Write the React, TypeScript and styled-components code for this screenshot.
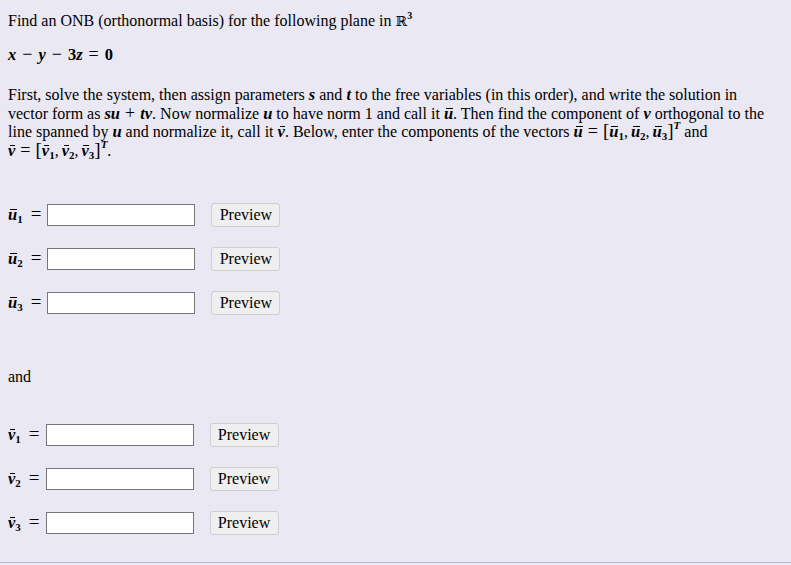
import styled, { createGlobalStyle } from "styled-components";

const GlobalStyle = createGlobalStyle`
  html, body {
    margin: 0;
    padding: 0;
    background: #eae8f3;
  }
  body {
    font-family: "Liberation Serif", "Times New Roman", serif;
    font-size: 16px;
    color: #000;
  }
`;

const Page = styled.div`
  min-height: 563px;
  box-sizing: border-box;
  padding: 8px 8px 0 8px;
  border-bottom: 1px solid #b9b1e2;
`;

const Title = styled.p`
  margin: 4px 0 0 0;
  line-height: 18px;
`;

const Equation = styled.p`
  margin: 16px 0 0 0;
  line-height: 18px;
`;

const Text = styled.p`
  margin: 22px 0 0 0;
  line-height: 18.5px;
  white-space: nowrap;
`;

const Var = styled.i`
  font-style: italic;
  font-weight: 700;
  font-size: 16.5px;
  line-height: 0;
`;

const Num = styled.b`
  font-size: 16.5px;
  line-height: 0;
`;

const Op = styled.span<{ $gap?: number }>`
  font-size: 18px;
  line-height: 0;
  margin: 0 ${({ $gap }) => $gap ?? 5}px;
`;

const LabelEq = styled.span`
  font-size: 19px;
  line-height: 0;
  margin-left: 8px;
`;

const Sub = styled.sub`
  font-size: 11px;
  font-style: normal;
  font-weight: 700;
  vertical-align: -3px;
  line-height: 0;
`;

const Sup = styled.sup`
  font-size: 11px;
  font-style: italic;
  font-weight: 700;
  vertical-align: 8px;
  line-height: 0;
`;

const BarVar = styled.span`
  position: relative;
  display: inline-block;
  font-style: italic;
  font-weight: 700;
  font-size: 16.5px;
  line-height: 16px;
  &::before {
    content: "";
    position: absolute;
    left: 2px;
    right: 0;
    top: 2px;
    height: 1px;
    background: #000;
  }
`;

const Bracket = styled.span`
  font-size: 19px;
  line-height: 0;
`;

const Comma = styled.span`
  margin-right: 3px;
`;

const Real = styled.span`
  font-family: "DejaVu Serif", serif;
  font-size: 14px;
`;

const RealSup = styled.sup`
  font-size: 10px;
  font-weight: 700;
  vertical-align: 7px;
  line-height: 0;
`;

const Fields = styled.div<{ $top: number }>`
  display: flex;
  flex-direction: column;
  gap: 21px;
  margin-top: ${({ $top }) => $top}px;
`;

const Row = styled.div`
  display: flex;
  align-items: center;
  height: 23px;
`;

const Label = styled.span`
  display: inline-flex;
  align-items: baseline;
  white-space: nowrap;
`;

const Input = styled.input`
  box-sizing: border-box;
  width: 148px;
  height: 22px;
  margin-left: 6px;
  border: 1px solid #767676;
  background: #fff;
  padding: 1px 2px;
  font: inherit;
`;

const Button = styled.button`
  box-sizing: border-box;
  height: 24px;
  width: 69px;
  margin-left: 16px;
  border: 1px solid #d0d0d0;
  border-radius: 3px;
  background: #efefef;
  font-family: "Liberation Serif", "Times New Roman", serif;
  font-size: 16px;
  color: #000;
  padding: 0;
`;

const And = styled.p`
  margin: 54px 0 0 0;
  line-height: 18px;
`;

const Bar = ({ v, n }: { v: string; n?: number }) => (
  <span>
    <BarVar>{v}</BarVar>
    {n !== undefined && <Sub>{n}</Sub>}
  </span>
);

const BarList = ({ v }: { v: string }) => (
  <>
    <Bracket>[</Bracket>
    <Bar v={v} n={1} />
    <Comma>,</Comma>
    <Bar v={v} n={2} />
    <Comma>,</Comma>
    <Bar v={v} n={3} />
    <Bracket>]</Bracket>
    <Sup>T</Sup>
  </>
);

const FieldRow = ({ v, n }: { v: string; n: number }) => (
  <Row>
    <Label>
      <Bar v={v} n={n} />
      <LabelEq>=</LabelEq>
    </Label>
    <Input type="text" />
    <Button>Preview</Button>
  </Row>
);

const App = () => {
  return (
    <Page>
      <GlobalStyle />
      <Title>
        Find an ONB (orthonormal basis) for the following plane in <Real>ℝ</Real>
        <RealSup>3</RealSup>
      </Title>
      <Equation>
        <Var>x</Var>
        <Op $gap={6}>−</Op>
        <Var>y</Var>
        <Op $gap={6}>−</Op>
        <Num>3</Num>
        <Var>z</Var>
        <Op $gap={6}>=</Op>
        <Num>0</Num>
      </Equation>
      <Text>
        First, solve the system, then assign parameters <Var>s</Var> and <Var>t</Var> to the free variables (in
        this order), and write the solution in
        <br />
        vector form as <Var>su</Var>
        <Op>+</Op>
        <Var>tv</Var>. Now normalize <Var>u</Var> to have norm 1 and call it <Bar v="u" />. Then find the
        component of <Var>v</Var> orthogonal to the
        <br />
        line spanned by <Var>u</Var> and normalize it, call it <Bar v="v" />. Below, enter the components of the
        vectors <Bar v="u" />
        <Op>=</Op>
        <BarList v="u" /> and
        <br />
        <Bar v="v" />
        <Op>=</Op>
        <BarList v="v" />.
      </Text>
      <Fields $top={43}>
        <FieldRow v="u" n={1} />
        <FieldRow v="u" n={2} />
        <FieldRow v="u" n={3} />
      </Fields>
      <And>and</And>
      <Fields $top={37}>
        <FieldRow v="v" n={1} />
        <FieldRow v="v" n={2} />
        <FieldRow v="v" n={3} />
      </Fields>
    </Page>
  );
};

export default App;
